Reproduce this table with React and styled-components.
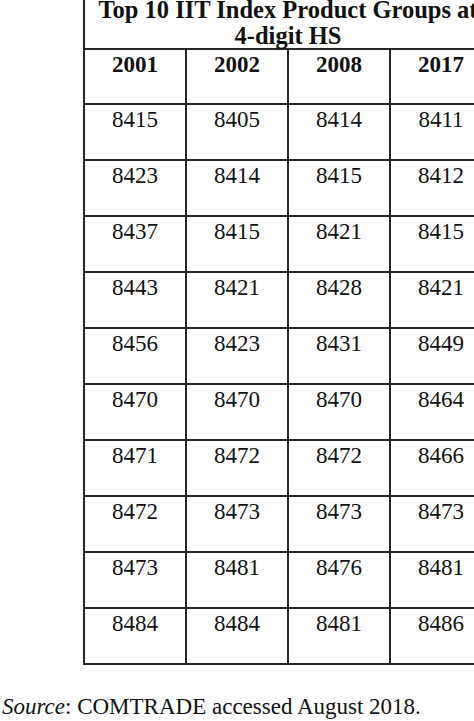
import React from "react";
import styled, { createGlobalStyle } from "styled-components";

const serif = `"Liberation Serif", "Times New Roman", Times, serif`;

const GlobalStyle = createGlobalStyle`
  html, body {
    margin: 0;
    padding: 0;
    background: #fff;
    overflow: hidden;
  }
  body {
    font-family: ${serif};
    color: #111;
  }
`;

const Page = styled.div`
  width: 474px;
  height: 721px;
  overflow: hidden;
`;

const Grid = styled.div`
  display: grid;
  grid-template-columns: repeat(4, 100px);
  gap: 2px;
  padding: 2px;
  background: #262626;
  width: max-content;
  margin: -6px 0 0 83px;
`;

const Cell = styled.div`
  background: #fff;
  font-family: ${serif};
  font-size: 23px;
  line-height: 26px;
  text-align: center;
  padding-top: 2px;
  height: ${(p) => p.$h}px;
  box-sizing: border-box;
  font-weight: ${(p) => (p.$bold ? 700 : 400)};
`;

const Title = styled.div`
  grid-column: 1 / -1;
  background: #fff;
  font-family: ${serif};
  font-size: 24.5px;
  line-height: 26px;
  font-weight: 700;
  text-align: center;
  height: 52px;
  padding-top: 1px;
  box-sizing: border-box;
  white-space: nowrap;
`;

const Source = styled.p`
  margin: 29px 0 0 2px;
  font-family: ${serif};
  font-size: 23px;
  line-height: 26px;
  white-space: nowrap;
`;

const years = ["2001", "2002", "2008", "2017"];

const rows = [
  ["8415", "8405", "8414", "8411"],
  ["8423", "8414", "8415", "8412"],
  ["8437", "8415", "8421", "8415"],
  ["8443", "8421", "8428", "8421"],
  ["8456", "8423", "8431", "8449"],
  ["8470", "8470", "8470", "8464"],
  ["8471", "8472", "8472", "8466"],
  ["8472", "8473", "8473", "8473"],
  ["8473", "8481", "8476", "8481"],
  ["8484", "8484", "8481", "8486"],
];

export default function App() {
  return (
    <Page>
      <GlobalStyle />
      <Grid>
        <Title>
          Top 10 IIT Index Product Groups at
          <br />
          4-digit HS
        </Title>
        {years.map((y) => (
          <Cell key={y} $bold $h={53}>
            {y}
          </Cell>
        ))}
        {rows.map((r, i) =>
          r.map((v, j) => (
            <Cell key={i + "-" + j} $h={54}>
              {v}
            </Cell>
          ))
        )}
      </Grid>
      <Source>
        <i>Source</i>: COMTRADE accessed August 2018.
      </Source>
    </Page>
  );
}
